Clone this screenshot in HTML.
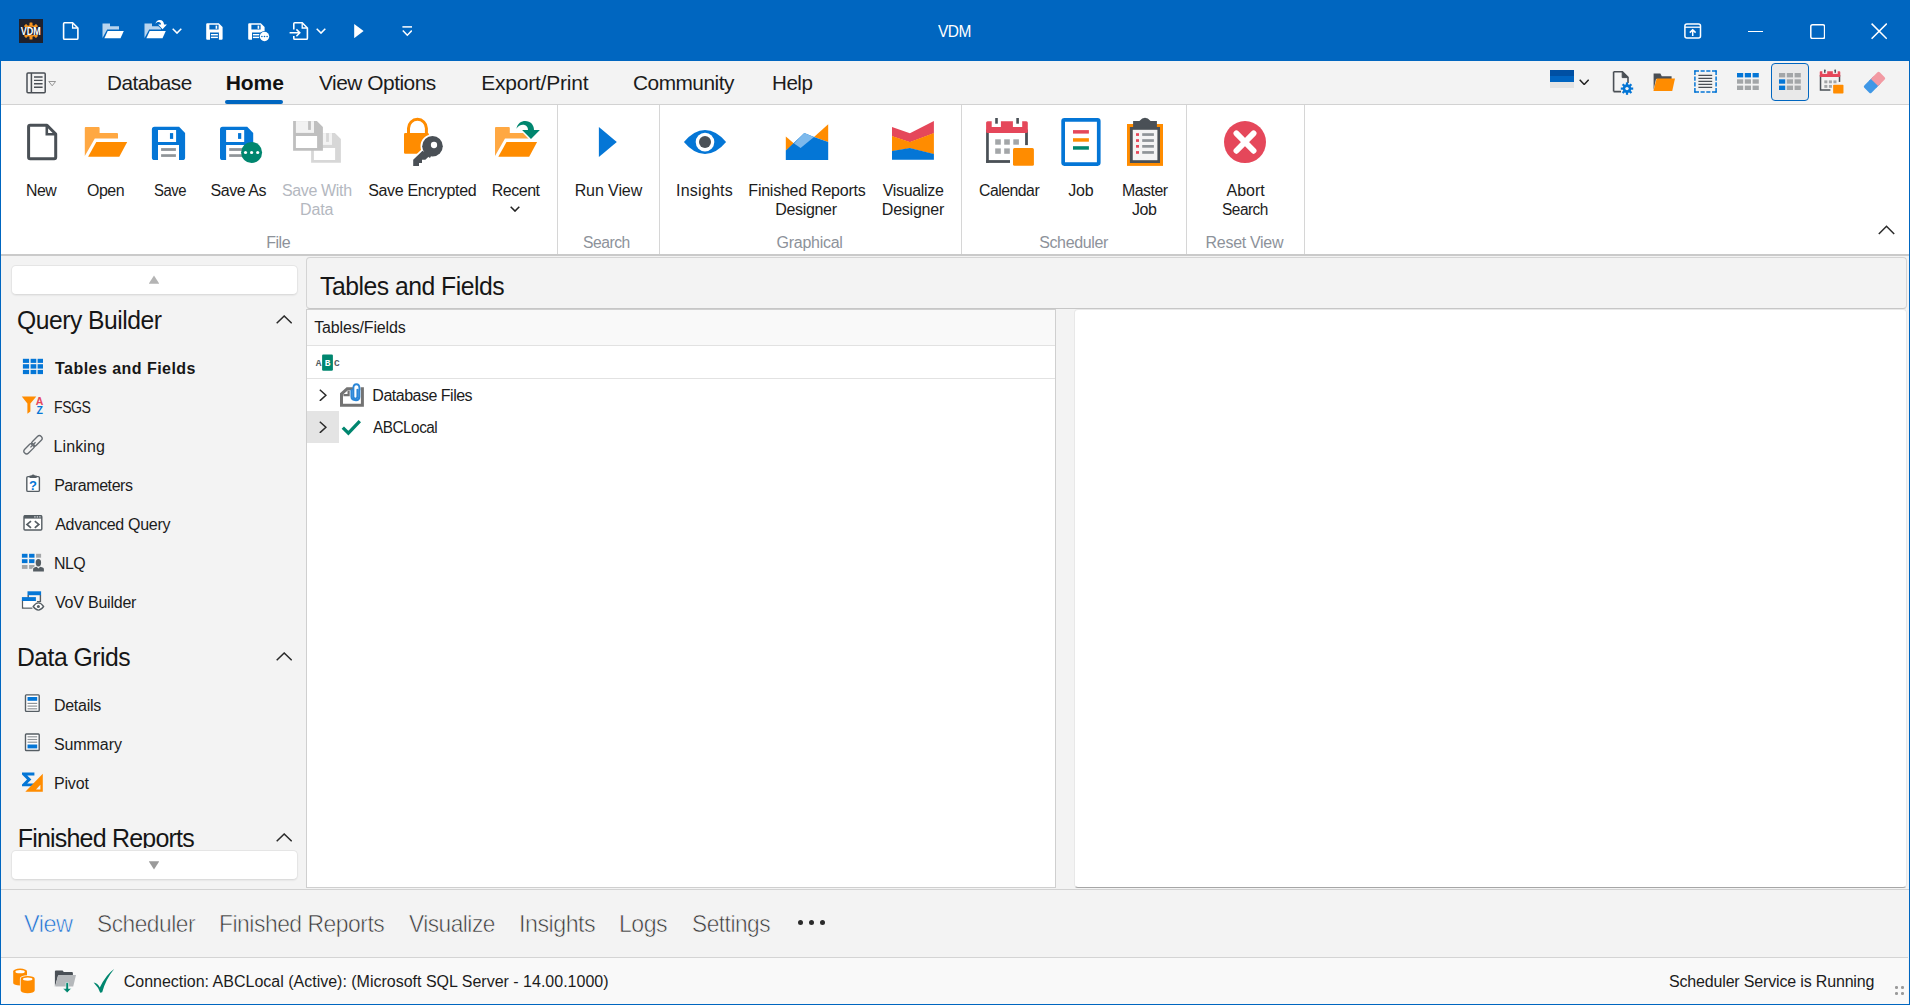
<!DOCTYPE html><html><head><meta charset="utf-8"><title>VDM</title><style>
html,body{margin:0;padding:0;}body{width:1910px;height:1005px;position:relative;overflow:hidden;background:#f3f3f3;font-family:"Liberation Sans", sans-serif;}
body>div,body>svg,body>span{position:absolute;display:block;}
span.t{white-space:nowrap;line-height:1;}
</style></head><body>
<div style="left:0px;top:0px;width:1910px;height:61px;background:#0066c0;"></div>
<div style="left:0px;top:104px;width:1910px;height:1px;background:#d2d2d2;"></div>
<div style="left:0px;top:105px;width:1910px;height:149px;background:#fff;"></div>
<div style="left:0px;top:254px;width:1910px;height:2px;background:#cacaca;"></div>
<div style="left:557px;top:105px;width:1px;height:149px;background:#d6d6d6;"></div>
<div style="left:659px;top:105px;width:1px;height:149px;background:#d6d6d6;"></div>
<div style="left:961px;top:105px;width:1px;height:149px;background:#d6d6d6;"></div>
<div style="left:1186px;top:105px;width:1px;height:149px;background:#d6d6d6;"></div>
<div style="left:1304px;top:105px;width:1px;height:149px;background:#d6d6d6;"></div>
<div style="left:0px;top:61px;width:1px;height:944px;background:#0066c0;"></div>
<div style="left:1909px;top:61px;width:1px;height:944px;background:#0066c0;"></div>
<div style="left:0px;top:1004px;width:1910px;height:1px;background:#0066c0;"></div>
<div style="left:1px;top:256px;width:304px;height:633px;background:#f3f3f3;"></div>
<div style="left:1px;top:889px;width:1908px;height:1px;background:#d2d2d2;"></div>
<div style="left:11px;top:265px;width:287px;height:30px;background:#fff;border:1px solid #e5e5e5;border-bottom-color:#dcdcdc;border-radius:5px;box-sizing:border-box;box-shadow:0 1px 1.5px rgba(0,0,0,.05);"></div>
<svg style="left:148px;top:275px;" width="12" height="9" viewBox="0 0 12 9"><path d="M6 0.5 L11 8.2 Q11.2 8.8 10.5 8.8 L1.5 8.8 Q0.8 8.8 1 8.2 Z" fill="#b4b4b4"/></svg>
<div style="left:11px;top:850px;width:287px;height:30px;background:#fff;border:1px solid #e5e5e5;border-bottom-color:#dcdcdc;border-radius:5px;box-sizing:border-box;box-shadow:0 1px 1.5px rgba(0,0,0,.05);"></div>
<svg style="left:148px;top:861px;" width="12" height="9" viewBox="0 0 12 9"><path d="M6 8.5 L11 0.8 Q11.2 0.2 10.5 0.2 L1.5 0.2 Q0.8 0.2 1 0.8 Z" fill="#9a9a9a"/></svg>
<div style="left:306px;top:257px;width:1601px;height:52px;background:#f3f3f3;border:1px solid #d4d4d4;border-bottom:1.5px solid #c6c6c6;border-radius:4px;box-sizing:border-box;"></div>
<div style="left:306px;top:309px;width:750px;height:579px;background:#fff;border:1px solid #cfcfcf;box-sizing:border-box;"></div>
<div style="left:307px;top:310px;width:748px;height:35px;background:#f9f9f9;"></div>
<div style="left:307px;top:345px;width:748px;height:1px;background:#e2e2e2;"></div>
<div style="left:307px;top:378px;width:748px;height:1px;background:#e2e2e2;"></div>
<div style="left:307px;top:411px;width:32px;height:32px;background:#e4e4e4;"></div>
<div style="left:1074px;top:309px;width:833px;height:579px;background:#fff;border:1px solid #e8e8e8;border-bottom-color:#a6a6a6;border-radius:4px;box-sizing:border-box;"></div>
<div style="left:1px;top:957px;width:1907px;height:1px;background:#d4d4d4;"></div>
<div style="left:1px;top:958px;width:1907px;height:46px;background:#f9f9f9;"></div>
<div style="left:0;top:820px;width:300px;height:27.6px;overflow:hidden;"><span class="t" id="fr" style="position:absolute;left:17.7px;top:6px;font-size:25px;color:#161616;letter-spacing:-0.80px;">Finished Reports</span></div>
<div style="left:798.0px;top:919.5px;width:5px;height:5px;background:#2a2a2a;border-radius:50%;"></div>
<div style="left:809.0px;top:919.5px;width:5px;height:5px;background:#2a2a2a;border-radius:50%;"></div>
<div style="left:820.0px;top:919.5px;width:5px;height:5px;background:#2a2a2a;border-radius:50%;"></div>
<svg style="left:19px;top:19px;" width="24" height="24" viewBox="0 0 24 24"><rect width="24" height="24" fill="#1f212d"/><g fill="#f7941e"><circle cx="12" cy="12" r="6.1"/><rect x="10.5" y="3.5" width="3" height="3.6" rx="0.5" transform="rotate(0 12 12)"/><rect x="10.5" y="3.5" width="3" height="3.6" rx="0.5" transform="rotate(45 12 12)"/><rect x="10.5" y="3.5" width="3" height="3.6" rx="0.5" transform="rotate(90 12 12)"/><rect x="10.5" y="3.5" width="3" height="3.6" rx="0.5" transform="rotate(135 12 12)"/><rect x="10.5" y="3.5" width="3" height="3.6" rx="0.5" transform="rotate(180 12 12)"/><rect x="10.5" y="3.5" width="3" height="3.6" rx="0.5" transform="rotate(225 12 12)"/><rect x="10.5" y="3.5" width="3" height="3.6" rx="0.5" transform="rotate(270 12 12)"/><rect x="10.5" y="3.5" width="3" height="3.6" rx="0.5" transform="rotate(315 12 12)"/></g><circle cx="12" cy="12" r="4.2" fill="#1f212d"/><rect x="0.6" y="8.1" width="22.8" height="7.9" fill="#1f212d"/><text x="11.8" y="16" font-family="Liberation Sans, sans-serif" font-size="11" font-weight="bold" fill="#fff" text-anchor="middle" textLength="20" lengthAdjust="spacingAndGlyphs">VDM</text></svg>
<svg style="left:62px;top:21px;" width="18" height="20" viewBox="0 0 18 20"><path d="M2.3 1.8 H10.6 L15.9 7 V17.2 Q15.9 18.3 14.8 18.3 H2.6 Q1.6 18.3 1.6 17.2 V2.8 Q1.6 1.8 2.6 1.8 Z" fill="none" stroke="#fff" stroke-width="1.6" stroke-linejoin="round"/><path d="M10.6 2.2 V7 H15.6" fill="none" stroke="#fff" stroke-width="1.3"/></svg>
<svg style="left:101.7px;top:23px;" width="23" height="16" viewBox="0 0 23 16"><path d="M0.5 0.4 H8 V3.3 H17 V6.6 H5.2 L0.5 15 Z" fill="#fff" opacity=".72"/><path d="M5.7 8 H21.8 L18.5 15.3 H2.4 Z" fill="#fff"/></svg>
<svg style="left:143.6px;top:23px;" width="23" height="16" viewBox="0 0 23 16"><path d="M0.5 0.4 H8 V3.3 H17 V6.6 H5.2 L0.5 15 Z" fill="#fff" opacity=".72"/><path d="M5.7 8 H21.8 L18.5 15.3 H2.4 Z" fill="#fff"/></svg>
<svg style="left:153px;top:18px;" width="16" height="13" viewBox="153 18 16 13"><g transform="translate(155.4,20) scale(0.49,0.51) translate(-516.4,-121)"><path d="M516.4 128.8 C517.4 123.4 521.4 121 525.2 121 C530.6 121 534 125 534 129.9 H539.9 L531 138.9 L522.1 129.9 H528 C528 127 526 124.8 522.9 124.8 C520.4 124.8 518 126 516.4 128.8 Z" fill="#0066c0" stroke="#0066c0" stroke-width="3.4"/><path d="M516.4 128.8 C517.4 123.4 521.4 121 525.2 121 C530.6 121 534 125 534 129.9 H539.9 L531 138.9 L522.1 129.9 H528 C528 127 526 124.8 522.9 124.8 C520.4 124.8 518 126 516.4 128.8 Z" fill="#fff"/></g></svg>
<svg style="left:172.3px;top:28.2px;" width="10" height="6" viewBox="0 0 10 6"><path d="M0.7 0.7 L5.0 5.1 L9.3 0.7" fill="none" stroke="#fff" stroke-width="1.5"/></svg>
<svg style="left:205.8px;top:23.2px;" width="17" height="17" viewBox="0 0 17 17"><path d="M1.2 0.2 H12.8 L16.6 4 V15.8 Q16.6 16.8 15.6 16.8 H1.2 Q0.2 16.8 0.2 15.8 V1.2 Q0.2 0.2 1.2 0.2 Z M3.4 1.8 V6.6 H12.6 V1.8 Z M4 9.6 V16.8 H12.9 V9.6 Z" fill="#fff" fill-rule="evenodd"/><rect x="9.6" y="2.6" width="1.6" height="3.2" fill="#fff"/><rect x="4.9" y="11" width="7" height="1.4" fill="#fff"/><rect x="4.9" y="13.7" width="7" height="1.4" fill="#fff"/></svg>
<svg style="left:248px;top:23.2px;" width="17" height="17" viewBox="0 0 17 17"><path d="M1.2 0.2 H12.8 L16.6 4 V15.8 Q16.6 16.8 15.6 16.8 H1.2 Q0.2 16.8 0.2 15.8 V1.2 Q0.2 0.2 1.2 0.2 Z M3.4 1.8 V6.6 H12.6 V1.8 Z M4 9.6 V16.8 H12.9 V9.6 Z" fill="#fff" fill-rule="evenodd"/><rect x="9.6" y="2.6" width="1.6" height="3.2" fill="#fff"/><rect x="4.9" y="11" width="7" height="1.4" fill="#fff"/><rect x="4.9" y="13.7" width="7" height="1.4" fill="#fff"/></svg>
<svg style="left:259px;top:31px;" width="11" height="11" viewBox="0 0 11 11"><circle cx="5.5" cy="5.5" r="5.5" fill="#0066c0"/><circle cx="5.5" cy="5.5" r="4.7" fill="#fff"/><circle cx="2.9" cy="5.5" r=".8" fill="#0066c0"/><circle cx="5.5" cy="5.5" r=".8" fill="#0066c0"/><circle cx="8.1" cy="5.5" r=".8" fill="#0066c0"/></svg>
<svg style="left:289px;top:21px;" width="20" height="20" viewBox="0 0 20 20"><path d="M4.8 8.4 V2.8 Q4.8 1.8 5.8 1.8 H13.2 L18.4 7 V17.2 Q18.4 18.3 17.4 18.3 H5.8 Q4.8 18.3 4.8 17.2 V15" fill="none" stroke="#fff" stroke-width="1.6"/><path d="M13.2 2.2 V7 H18" fill="none" stroke="#fff" stroke-width="1.3"/><path d="M0.6 11.8 H10.6 M7.4 8.4 L10.8 11.8 L7.4 15.2" fill="none" stroke="#fff" stroke-width="1.5"/></svg>
<svg style="left:316.3px;top:28.2px;" width="10" height="6" viewBox="0 0 10 6"><path d="M0.7 0.7 L5.0 5.1 L9.3 0.7" fill="none" stroke="#fff" stroke-width="1.5"/></svg>
<svg style="left:353.8px;top:24px;" width="10" height="14.2" viewBox="0 0 10 14.2"><path d="M0.2 0 L9.6 7.1 L0.2 14.2 Z" fill="#fff"/></svg>
<svg style="left:401.8px;top:26px;" width="10.6" height="10.6" viewBox="0 0 10.6 10.6"><path d="M0.4 0.9 H10.2" stroke="#fff" stroke-width="1.5"/><path d="M0.8 4.6 L5.3 9.2 L9.8 4.6" fill="none" stroke="#fff" stroke-width="1.5"/></svg>
<svg style="left:1683.5px;top:23px;" width="18" height="16" viewBox="0 0 18 16"><rect x="0.9" y="0.9" width="15.6" height="14" rx="2" fill="none" stroke="#fff" stroke-width="1.5"/><path d="M1 4.2 H16.4" stroke="#fff" stroke-width="1.3"/><path d="M8.7 13 V7 M5.8 9.6 L8.7 6.7 L11.6 9.6" fill="none" stroke="#fff" stroke-width="1.5"/></svg>
<div style="left:1747.5px;top:31px;width:15.3px;height:1.4px;background:#fff;"></div>
<svg style="left:1809.5px;top:23.5px;" width="15.4" height="15.4" viewBox="0 0 15.4 15.4"><rect x="0.8" y="0.8" width="13.8" height="13.8" rx="1.8" fill="none" stroke="#fff" stroke-width="1.5"/></svg>
<svg style="left:1871px;top:23.3px;" width="16.4" height="16.4" viewBox="0 0 16.4 16.4"><path d="M0.6 0.6 L15.8 15.8 M15.8 0.6 L0.6 15.8" stroke="#fff" stroke-width="1.5"/></svg>
<svg style="left:25.5px;top:72px;" width="21" height="22" viewBox="0 0 21 22"><rect x="1" y="1" width="18.2" height="19.8" rx="1" fill="none" stroke="#4a4f55" stroke-width="1.5"/><path d="M5.4 1 V20.8" stroke="#4a4f55" stroke-width="1.5"/><path d="M8 5 H16.6 M8 8.4 H16.6 M8 11.8 H16.6 M8 15.2 H16.6" stroke="#4a4f55" stroke-width="1.4"/></svg>
<svg style="left:47.5px;top:81px;" width="8.4" height="5.6" viewBox="0 0 8.4 5.6"><path d="M0.8 0.5 H7.6 L4.2 4.8 Z" fill="none" stroke="#8a8a8a" stroke-width="0.9"/></svg>
<div style="left:225px;top:100px;width:58px;height:4px;background:#0066c0;border-radius:2px;"></div>
<div style="left:1550px;top:70px;width:24px;height:6px;background:#0050a3;"></div>
<div style="left:1550px;top:76px;width:24px;height:6px;background:#0064c0;"></div>
<div style="left:1550px;top:82px;width:24px;height:6px;background:#e4e4e4;"></div>
<svg style="left:1579px;top:78.6px;" width="10.4" height="6.4" viewBox="0 0 10.4 6.4"><path d="M0.7 0.7 L5.2 5.5 L9.7 0.7" fill="none" stroke="#222" stroke-width="1.5"/></svg>
<svg style="left:1612px;top:70px;" width="22" height="25" viewBox="0 0 22 25"><path d="M1.6 1.8 H10.4 L16 7.4 V13 M9 21.6 H1.6 Z M1.6 1.8 V21.6" fill="none" stroke="#4a4f55" stroke-width="1.6"/><path d="M10.2 2 V7.6 H15.8 Z" fill="#4a4f55" stroke="#4a4f55" stroke-width="1"/><g fill="#0476d6"><circle cx="15" cy="18.6" r="4.3"/><rect x="13.9" y="12.4" width="2.2" height="3" transform="rotate(0 15 18.6)"/><rect x="13.9" y="12.4" width="2.2" height="3" transform="rotate(45 15 18.6)"/><rect x="13.9" y="12.4" width="2.2" height="3" transform="rotate(90 15 18.6)"/><rect x="13.9" y="12.4" width="2.2" height="3" transform="rotate(135 15 18.6)"/><rect x="13.9" y="12.4" width="2.2" height="3" transform="rotate(180 15 18.6)"/><rect x="13.9" y="12.4" width="2.2" height="3" transform="rotate(225 15 18.6)"/><rect x="13.9" y="12.4" width="2.2" height="3" transform="rotate(270 15 18.6)"/><rect x="13.9" y="12.4" width="2.2" height="3" transform="rotate(315 15 18.6)"/></g><circle cx="15" cy="18.6" r="1.7" fill="#f3f3f3"/></svg>
<svg style="left:1652.5px;top:72.5px;" width="22.4" height="18.6" viewBox="0 0 22.4 18.6"><path d="M0.6 0.4 H7.4 L8.8 3.2 H18.6 V6 H3 L0.6 17 Z" fill="#4a4f55"/><path d="M3.6 5.4 H22 L19.2 18.2 H0.4 Z" fill="#ff8c00"/></svg>
<svg style="left:1693.8px;top:69.8px;" width="23" height="23" viewBox="0 0 23 23"><path d="M0.9 0.9 L22.1 0.9" stroke="#0476d6" stroke-width="1.5" stroke-dasharray="4.1 1.6" stroke-linecap="butt"/><path d="M22.1 0.9 L22.1 22.1" stroke="#0476d6" stroke-width="1.5" stroke-dasharray="4.1 1.6" stroke-linecap="butt"/><path d="M22.1 22.1 L0.9 22.1" stroke="#0476d6" stroke-width="1.5" stroke-dasharray="4.1 1.6" stroke-linecap="butt"/><path d="M0.9 22.1 L0.9 0.9" stroke="#0476d6" stroke-width="1.5" stroke-dasharray="4.1 1.6" stroke-linecap="butt"/><rect x="0.15" y="0.15" width="1.5" height="1.5" fill="#0476d6"/><rect x="21.35" y="0.15" width="1.5" height="1.5" fill="#0476d6"/><rect x="0.15" y="21.35" width="1.5" height="1.5" fill="#0476d6"/><rect x="21.35" y="21.35" width="1.5" height="1.5" fill="#0476d6"/><path d="M4.4 5.3 H18.2 M4.4 8.3 H18.2 M4.4 11.3 H18.2 M4.4 14.3 H18.2 M4.4 17.3 H18.2" stroke="#4a4f55" stroke-width="1.35"/></svg>
<svg style="left:1737px;top:72.9px;" width="21.8" height="17" viewBox="0 0 21.8 17"><rect x="0.0" y="0.0" width="6.2" height="4.4" fill="#0476d6"/><rect x="7.8" y="0.0" width="6.2" height="4.4" fill="#0476d6"/><rect x="15.6" y="0.0" width="6.2" height="4.4" fill="#0476d6"/><rect x="0.0" y="6.3" width="6.2" height="4.4" fill="#a3a6a8"/><rect x="7.8" y="6.3" width="6.2" height="4.4" fill="#a3a6a8"/><rect x="15.6" y="6.3" width="6.2" height="4.4" fill="#a3a6a8"/><rect x="0.0" y="12.6" width="6.2" height="4.4" fill="#a3a6a8"/><rect x="7.8" y="12.6" width="6.2" height="4.4" fill="#a3a6a8"/><rect x="15.6" y="12.6" width="6.2" height="4.4" fill="#a3a6a8"/></svg>
<div style="left:1771px;top:63px;width:38px;height:38px;background:#e9e9e9;border:1px solid #0066c0;border-radius:4px;box-sizing:border-box;"></div>
<svg style="left:1779px;top:72.9px;" width="21.8" height="17" viewBox="0 0 21.8 17"><rect x="0.0" y="0.0" width="6.2" height="4.4" fill="#a3a6a8"/><rect x="7.8" y="0.0" width="6.2" height="4.4" fill="#a3a6a8"/><rect x="15.6" y="0.0" width="6.2" height="4.4" fill="#a3a6a8"/><rect x="0.0" y="6.3" width="6.2" height="4.4" fill="#0476d6"/><rect x="7.8" y="6.3" width="6.2" height="4.4" fill="#a3a6a8"/><rect x="15.6" y="6.3" width="6.2" height="4.4" fill="#a3a6a8"/><rect x="0.0" y="12.6" width="6.2" height="4.4" fill="#0476d6"/><rect x="7.8" y="12.6" width="6.2" height="4.4" fill="#a3a6a8"/><rect x="15.6" y="12.6" width="6.2" height="4.4" fill="#a3a6a8"/></svg>
<svg style="left:1819px;top:69.3px;" width="25.08" height="25.08" viewBox="0 0 33 33"><path d="M2 8 V27.5 H15" fill="none" stroke="#4a5056" stroke-width="2"/><path d="M27 8 V17" stroke="#4a5056" stroke-width="2"/><rect x="1" y="3" width="27" height="7.6" rx="1" fill="#e5475a"/><rect x="6.6" y="1" width="2" height="4" fill="#4a5056"/><rect x="20.4" y="1" width="2" height="4" fill="#4a5056"/><rect x="4.4" y="2.6" width="6.4" height="3.8" fill="#f3f3f3"/><rect x="18.2" y="2.6" width="6.4" height="3.8" fill="#f3f3f3"/><rect x="6.6" y="1" width="2" height="4" fill="#4a5056"/><rect x="20.4" y="1" width="2" height="4" fill="#4a5056"/><g fill="#a3a6a8"><rect x="7" y="15" width="4" height="3.8"/><rect x="13" y="15" width="4" height="3.8"/><rect x="19" y="15" width="4" height="3.8"/><rect x="7" y="21" width="4" height="3.8"/><rect x="13" y="21" width="4" height="3.8"/></g><rect x="18.6" y="20.6" width="13.6" height="11.6" rx="1" fill="#ff8c00"/></svg>
<svg style="left:1862.5px;top:70.5px;" width="23" height="23" viewBox="0 0 23 23"><g transform="rotate(-45 11.5 11.5)"><rect x="0.6" y="6.4" width="10.9" height="10.2" rx="1.6" fill="#3f97e6"/><rect x="11.5" y="6.4" width="10.9" height="10.2" rx="1.6" fill="#f29aa3"/><rect x="9" y="6.4" width="5" height="10.2" fill="#3f97e6"/><rect x="11.5" y="6.4" width="4" height="10.2" fill="#f29aa3"/></g></svg>
<svg style="left:1877.6px;top:225.2px;" width="17" height="10" viewBox="0 0 17 10"><path d="M0.8 9 L8.5 1.2 L16.2 9" fill="none" stroke="#2a2a2a" stroke-width="1.5"/></svg>
<svg style="left:20px;top:116px;" width="46" height="52" viewBox="20 116 46 52"><path d="M30.2 125.2 H47 L55.7 134 V157.2 Q55.7 158.7 54.2 158.7 H30.2 Q28.6 158.7 28.6 157.2 V126.8 Q28.6 125.2 30.2 125.2 Z" fill="none" stroke="#4a5056" stroke-width="3" stroke-linejoin="round"/><path d="M46.8 126 V134.2 H55" fill="none" stroke="#4a5056" stroke-width="2.6"/></svg>
<svg style="left:82px;top:118px;" width="48" height="48" viewBox="82 118 48 48"><path d="M85.7 126.9 H98.6 Q99.6 126.9 99.6 127.9 V133 H117 Q118 133 118 134 V138.6 H94.8 L84.8 155.9 V127.9 Q84.8 126.9 85.7 126.9 Z" fill="#ffa842"/><path d="M96.3 142 H127.2 L119.3 156.8 H88.1 Z" fill="#ff8c00"/></svg>
<svg style="left:146px;top:120px;" width="48" height="48" viewBox="146 120 48 48"><path d="M154.5 126.8 H179.1 L185.1 133 V157.4 Q185.1 160 182.5 160 H154.5 Q151.9 160 151.9 157.4 V129.4 Q151.9 126.8 154.5 126.8 Z" fill="#0476d6"/><rect x="158.0" y="130" width="18.1" height="12" fill="#fff"/><rect x="169.95" y="133.1" width="3.2" height="5.8" fill="#0476d6"/><rect x="158.0" y="145" width="21" height="15.2" fill="#fff"/><rect x="161.1" y="148.1" width="14.8" height="2.8" fill="#8f9498"/><rect x="161.1" y="154.2" width="14.8" height="2.7" fill="#8f9498"/></svg>
<svg style="left:214px;top:120px;" width="52" height="48" viewBox="214 120 52 48"><path d="M222.6 126.8 H247.2 L253.2 133 V157.4 Q253.2 160 250.6 160 H222.6 Q220.0 160 220.0 157.4 V129.4 Q220.0 126.8 222.6 126.8 Z" fill="#0476d6"/><rect x="226.1" y="130" width="18.1" height="12" fill="#fff"/><rect x="238.05" y="133.1" width="3.2" height="5.8" fill="#0476d6"/><rect x="226.1" y="145" width="21" height="15.2" fill="#fff"/><rect x="229.2" y="148.1" width="14.8" height="2.8" fill="#8f9498"/><rect x="229.2" y="154.2" width="14.8" height="2.7" fill="#8f9498"/><circle cx="251.6" cy="152.5" r="10.5" fill="#00866f"/><circle cx="245.5" cy="152.5" r="1.6" fill="#fff"/><circle cx="251.6" cy="152.5" r="1.6" fill="#fff"/><circle cx="257.7" cy="152.5" r="1.6" fill="#fff"/></svg>
<svg style="left:290px;top:118px;" width="54" height="48" viewBox="290 118 54 48"><path d="M311.1 133.1 H334.9 L340.9 139.1 V162.8 H311.1 Z" fill="#d7d7d7"/><rect x="313.9" y="133.1" width="18.1" height="11.8" fill="#f3f3f3"/><rect x="326.1" y="133.1" width="2.8" height="8.8" fill="#d7d7d7"/><rect x="313.9" y="148.0" width="21.2" height="12" fill="#fff"/><path d="M293.1 121.1 H316.9 L322.9 127.1 V150.8 H293.1 Z" fill="#bfbfbf"/><rect x="295.9" y="121.1" width="18.1" height="11.8" fill="#f2f2f2"/><rect x="308.1" y="121.1" width="2.8" height="8.8" fill="#bfbfbf"/><rect x="295.9" y="136.0" width="21.2" height="12" fill="#fff"/></svg>
<svg style="left:400px;top:116px;" width="46" height="52" viewBox="400 116 46 52"><path d="M408.5 134 V128.3 A8.95 8.95 0 0 1 426.4 128.3 V134" fill="none" stroke="#ff8c00" stroke-width="3"/><rect x="404" y="133" width="24.8" height="20.8" rx="1.2" fill="#ff8c00"/><g stroke="#fff" stroke-width="3.4" stroke-linejoin="round" fill="#fff"><circle cx="432.5" cy="146.3" r="10.3"/><path d="M422.6 150.8 L413.2 159.8 V166 H419 V163 H422 V159.8 H425.3 L428.8 156.5 Z"/></g><circle cx="432.5" cy="146.3" r="10.3" fill="#4a5056"/><path d="M422.6 150.8 L413.2 159.8 V166 H419 V163 H422 V159.8 H425.3 L428.8 156.5 Z" fill="#4a5056"/><path d="M421 152 L430 158 L434 150 Z" fill="#4a5056"/><circle cx="434" cy="145" r="3.15" fill="#fff"/></svg>
<svg style="left:492px;top:118px;" width="50" height="48" viewBox="492 118 50 48"><path d="M496 126.9 H508.8 Q509.8 126.9 509.8 127.9 V133 H524 L529 138.6 H505 L495 155.9 V127.9 Q495 126.9 496 126.9 Z" fill="#ffa842"/><path d="M506.5 142 H537.1 L529.2 156.8 H498.3 Z" fill="#ff8c00"/><path d="M516.4 128.8 C517.4 123.4 521.4 121 525.2 121 C530.6 121 534 125 534 129.9 H539.9 L531 138.9 L522.1 129.9 H528 C528 127 526 124.8 522.9 124.8 C520.4 124.8 518 126 516.4 128.8 Z" fill="#fff" stroke="#fff" stroke-width="3" stroke-linejoin="round"/><path d="M516.4 128.8 C517.4 123.4 521.4 121 525.2 121 C530.6 121 534 125 534 129.9 H539.9 L531 138.9 L522.1 129.9 H528 C528 127 526 124.8 522.9 124.8 C520.4 124.8 518 126 516.4 128.8 Z" fill="#00866f"/></svg>
<svg style="left:510px;top:206.4px;" width="10" height="6" viewBox="0 0 10 6"><path d="M0.7 0.7 L5.0 5.1 L9.3 0.7" fill="none" stroke="#222" stroke-width="1.5"/></svg>
<svg style="left:596px;top:124px;" width="24" height="36" viewBox="596 124 24 36"><path d="M598.9 127.1 L616.8 142.1 L598.9 157.1 Z" fill="#0476d6"/></svg>
<svg style="left:682px;top:126px;" width="46" height="32" viewBox="682 126 46 32"><path d="M683.9 142.1 Q694 130.1 705 130.1 Q716 130.1 726.1 142.1 Q716 154.1 705 154.1 Q694 154.1 683.9 142.1 Z" fill="#0476d6"/><circle cx="705" cy="142.1" r="9.3" fill="#fff"/><circle cx="705" cy="142.1" r="6" fill="#4a5056"/></svg>
<svg style="left:784px;top:122px;" width="46" height="40" viewBox="784 122 46 40"><path d="M785.8 136.6 L794 143.5 L785.8 150.6 Z" fill="#ff8c00"/><path d="M828.2 124.2 L814 137 L828.2 142 Z" fill="#ff8c00"/><path d="M785.8 159.9 V150.4 L804.3 132.9 L814 137 L828.2 142 V159.9 Z" fill="#0476d6"/><path d="M804.3 132.9 L814 137 L800.6 148 L794 143.5 Z" fill="#7db9ec"/></svg>
<svg style="left:890px;top:119px;" width="46" height="43" viewBox="890 119 46 43"><path d="M892 126.9 L909.9 133.2 L933.9 121 V133.2 L909.9 142.2 L892 136.2 Z" fill="#e5475a"/><path d="M892 135.9 L909.9 141.9 L933.9 132.9 V154.3 L909.9 148.2 L892 151.3 Z" fill="#ff8c00"/><path d="M892 151.1 L909.9 148 L933.9 154.1 V159.8 H892 Z" fill="#0476d6"/></svg>
<svg style="left:984px;top:116px;" width="52" height="52" viewBox="984 116 52 52"><rect x="986.1" y="129.6" width="2.7" height="33.3" rx="0" fill="#4a5056"/><rect x="986.1" y="160.1" width="23.9" height="2.8" rx="0" fill="#4a5056"/><rect x="1025.1" y="129.6" width="2.8" height="15.5" rx="0" fill="#4a5056"/><rect x="986.1" y="121.2" width="41.7" height="11.7" rx="1.5" fill="#e5475a"/><rect x="991.7" y="120.8" width="9.2" height="6.2" rx="0" fill="#fff"/><rect x="1012.9" y="120.8" width="9.3" height="6.2" rx="0" fill="#fff"/><rect x="995.2" y="118.0" width="2.6" height="5.7" rx="0" fill="#4a5056"/><rect x="1016.3" y="118.0" width="2.6" height="5.7" rx="0" fill="#4a5056"/><rect x="995.2" y="139.3" width="5.6" height="5.4" rx="0" fill="#a3a6a8"/><rect x="1004.2" y="139.3" width="5.6" height="5.4" rx="0" fill="#a3a6a8"/><rect x="1013.3" y="139.3" width="5.6" height="5.4" rx="0" fill="#a3a6a8"/><rect x="995.2" y="148.4" width="5.6" height="5.4" rx="0" fill="#a3a6a8"/><rect x="1004.2" y="148.4" width="5.6" height="5.4" rx="0" fill="#a3a6a8"/><rect x="1013.0" y="148.1" width="20.9" height="17.7" rx="1.5" fill="#ff8c00"/></svg>
<svg style="left:1059px;top:116px;" width="44" height="52" viewBox="1059 116 44 52"><rect x="1063.15" y="119.85" width="35.6" height="44.2" rx="1.2" fill="#fff" stroke="#0476d6" stroke-width="3.7"/><rect x="1073" y="130.1" width="15.9" height="3.5" fill="#e5475a"/><rect x="1073" y="138.2" width="15.9" height="3.5" fill="#ff8c00"/><rect x="1073" y="146.2" width="15.9" height="3.5" fill="#00866f"/></svg>
<svg style="left:1125px;top:114px;" width="40" height="54" viewBox="1125 114 40 54"><rect x="1127" y="124" width="36" height="41.9" fill="#ff8c00"/><rect x="1129.9" y="127" width="30.1" height="36" fill="#4a5056"/><path d="M1133.1 127.7 V120.9 H1139.4 Q1145 114.8 1150.6 120.9 H1156.9 V127.7 Z" fill="#4a5056"/><rect x="1132.75" y="129.8" width="24.65" height="30.4" fill="#f4f4f4"/><rect x="1136" y="133.2" width="3" height="2.7" fill="#e5475a"/><rect x="1142.2" y="133.2" width="11.7" height="2.7" fill="#8f9498"/><rect x="1136" y="139.2" width="3" height="2.7" fill="#e5475a"/><rect x="1142.2" y="139.2" width="11.7" height="2.7" fill="#8f9498"/><rect x="1136" y="145" width="3" height="2.7" fill="#e5475a"/><rect x="1142.2" y="145" width="11.7" height="2.7" fill="#8f9498"/><rect x="1136" y="151.1" width="3" height="2.7" fill="#e5475a"/><rect x="1142.2" y="151.1" width="11.7" height="2.7" fill="#8f9498"/></svg>
<svg style="left:1222px;top:119px;" width="46" height="46" viewBox="1222 119 46 46"><circle cx="1245" cy="142.1" r="21" fill="#e5475a"/><path d="M1236.4 133.4 L1253.6 150.8 M1253.6 133.4 L1236.4 150.8" stroke="#fff" stroke-width="5.8" stroke-linecap="round"/></svg>
<svg style="left:276px;top:315.0px;" width="16.4" height="9" viewBox="0 0 16.4 9"><path d="M0.7 8.3 L8.2 1 L15.7 8.3" fill="none" stroke="#2a2a2a" stroke-width="1.5"/></svg>
<svg style="left:276px;top:652.0px;" width="16.4" height="9" viewBox="0 0 16.4 9"><path d="M0.7 8.3 L8.2 1 L15.7 8.3" fill="none" stroke="#2a2a2a" stroke-width="1.5"/></svg>
<svg style="left:276px;top:833.0px;" width="16.4" height="9" viewBox="0 0 16.4 9"><path d="M0.7 8.3 L8.2 1 L15.7 8.3" fill="none" stroke="#2a2a2a" stroke-width="1.5"/></svg>
<svg style="left:22px;top:358px;" width="22" height="17" viewBox="22 358 22 17"><rect x="22.9" y="358.8" width="6.2" height="4.1" fill="#0476d6"/><rect x="22.9" y="364.2" width="6.2" height="4.4" fill="#0476d6"/><rect x="22.9" y="369.9" width="6.2" height="4.2" fill="#0476d6"/><rect x="30.6" y="358.8" width="5.7" height="4.1" fill="#0476d6"/><rect x="30.6" y="364.2" width="5.7" height="4.4" fill="#0476d6"/><rect x="30.6" y="369.9" width="5.7" height="4.2" fill="#0476d6"/><rect x="37.6" y="358.8" width="5.4" height="4.1" fill="#0476d6"/><rect x="37.6" y="364.2" width="5.4" height="4.4" fill="#0476d6"/><rect x="37.6" y="369.9" width="5.4" height="4.2" fill="#0476d6"/></svg>
<svg style="left:21px;top:395px;" width="24" height="21" viewBox="21 395 24 21"><path d="M21.8 396.5 H36.3 L30.4 403.6 V411.6 L27.4 413.7 V403.6 Z" fill="#ff8c00"/><text x="39.6" y="404.6" font-family="Liberation Sans, sans-serif" font-weight="bold" font-size="10.5" fill="#e5475a" text-anchor="middle">A</text><text x="39.6" y="413.9" font-family="Liberation Sans, sans-serif" font-weight="bold" font-size="10.5" fill="#0476d6" text-anchor="middle">Z</text></svg>
<svg style="left:22px;top:434px;" width="22" height="22" viewBox="22 434 22 22"><g fill="none" stroke="#666c72" stroke-width="1.35" transform="rotate(-45 33 444.8)"><rect x="21.3" y="442.1" width="12.4" height="5.4" rx="2.7"/><rect x="32.3" y="442.1" width="12.4" height="5.4" rx="2.7"/></g><g transform="rotate(-45 33 444.8)"><rect x="29.4" y="444.15" width="7.2" height="1.3" fill="#666c72"/></g></svg>
<svg style="left:25px;top:473px;" width="16" height="20" viewBox="25 473 16 20"><rect x="26.8" y="476.6" width="12.6" height="14.8" rx="1.2" fill="#fff" stroke="#555d63" stroke-width="1.4"/><path d="M29.6 478 V475.6 H31.2 Q33.1 473.2 35 475.6 H36.6 V478 Z" fill="#555d63"/><text x="33.1" y="489.7" font-family="Liberation Sans, sans-serif" font-weight="bold" font-size="13" fill="#0476d6" text-anchor="middle">?</text></svg>
<svg style="left:22px;top:514px;" width="22" height="18" viewBox="22 514 22 18"><rect x="24" y="515.7" width="17.8" height="14.3" rx="1" fill="#fff" stroke="#555d63" stroke-width="1.4"/><rect x="24" y="515.4" width="17.8" height="3.2" fill="#555d63"/><rect x="34.2" y="516.3" width="1.4" height="1.2" fill="#dfe3e6"/><rect x="36.7" y="516.3" width="1.4" height="1.2" fill="#dfe3e6"/><rect x="39.2" y="516.3" width="1.4" height="1.2" fill="#dfe3e6"/><path d="M31 521.1 L27 524.4 L31 527.8 M34.8 521.1 L38.8 524.4 L34.8 527.8" fill="none" stroke="#555d63" stroke-width="1.7"/></svg>
<svg style="left:21px;top:553px;" width="24" height="20" viewBox="21 553 24 20"><rect x="21.9" y="553.8" width="5.6" height="3.9" fill="#0476d6"/><rect x="29.1" y="553.8" width="5.4" height="3.9" fill="#0476d6"/><rect x="36.1" y="553.8" width="5.0" height="3.9" fill="#a3a6a8"/><rect x="21.9" y="559.2" width="5.6" height="3.9" fill="#0476d6"/><rect x="29.1" y="559.2" width="5.4" height="3.9" fill="#0476d6"/><rect x="21.9" y="565" width="5.6" height="3.9" fill="#a3a6a8"/><rect x="29.1" y="565" width="5.4" height="3.9" fill="#a3a6a8"/><g stroke="#f3f3f3" stroke-width="2" fill="#f3f3f3"><ellipse cx="38.4" cy="562.7" rx="2.7" ry="3.7"/><path d="M33.1 571.4 V569.2 Q33.1 568 34.4 567.6 L38.4 566.4 L42.6 567.6 Q43.9 568 43.9 569.2 V571.4 Z"/></g><ellipse cx="38.4" cy="562.7" rx="2.7" ry="3.7" fill="#555d63"/><path d="M33.1 571.4 V569.2 Q33.1 568 34.4 567.6 L36.6 566.8 L38.4 568.4 L40.2 566.8 L42.6 567.6 Q43.9 568 43.9 569.2 V571.4 Z" fill="#555d63"/></svg>
<svg style="left:21px;top:590px;" width="24" height="22" viewBox="21 590 24 22"><path d="M28.2 595 V598 M40.4 595 V601.6 H37" fill="none" stroke="#555d63" stroke-width="1.4"/><rect x="27.5" y="591.3" width="13.6" height="3.9" fill="#0476d6"/><path d="M22.6 600 V608 H32.4" fill="#fff" stroke="#555d63" stroke-width="1.4"/><rect x="23.3" y="601" width="12" height="6.4" fill="#fff"/><rect x="21.9" y="597.1" width="14" height="3.9" fill="#0476d6"/><ellipse cx="38.4" cy="606.5" rx="5.6" ry="4.2" fill="#f3f3f3"/><path d="M33.2 606.5 Q38.4 599.4 43.6 606.5 Q38.4 613.6 33.2 606.5 Z" fill="#fff" stroke="#555d63" stroke-width="1.3"/><circle cx="38.4" cy="606.5" r="1.5" fill="#555d63"/></svg>
<svg style="left:24px;top:693px;" width="17" height="20" viewBox="24 693 17 20"><rect x="25.5" y="694.9" width="13.7" height="16.5" rx="0.8" fill="#fff" stroke="#555d63" stroke-width="1.4"/><rect x="27.5" y="697.0" width="9.7" height="3.8" fill="#0476d6"/><rect x="27.5" y="702.8" width="9.7" height="1.2" fill="#8f9498"/><rect x="27.5" y="705.5" width="9.7" height="1.2" fill="#8f9498"/><rect x="27.5" y="708.2" width="9.7" height="1.2" fill="#8f9498"/></svg>
<svg style="left:24px;top:732px;" width="17" height="20" viewBox="24 732 17 20"><rect x="25.5" y="734.0" width="13.7" height="16.5" rx="0.8" fill="#fff" stroke="#555d63" stroke-width="1.4"/><rect x="27.5" y="736.2" width="9.7" height="1.2" fill="#8f9498"/><rect x="27.5" y="738.9" width="9.7" height="1.2" fill="#8f9498"/><rect x="27.5" y="741.6" width="9.7" height="1.2" fill="#8f9498"/><rect x="27.5" y="744.5" width="9.7" height="3.9" fill="#0476d6"/></svg>
<svg style="left:21px;top:771px;" width="23" height="22" viewBox="21 771 23 22"><path d="M22 772.6 H34.4 V775.4 H27.2 L31.4 779.4 L27.2 783.5 H34.6 V786.3 H22 V784.4 L27 779.4 L22 774.6 Z" fill="#0476d6"/><path d="M42.8 773.7 V791.8 H25.3 Z M40.4 784.8 L36 789.4 H40.4 Z" fill="#ff8c00" fill-rule="evenodd"/></svg>
<svg style="left:315px;top:353px;" width="26" height="19" viewBox="315 353 26 19"><rect x="322.1" y="354.5" width="10.8" height="16.2" rx="1.2" fill="#00866f"/><text x="318.7" y="366.4" font-family="Liberation Mono, monospace" font-weight="bold" font-size="9.5" fill="#555d63" text-anchor="middle">A</text><text x="327.5" y="366.4" font-family="Liberation Mono, monospace" font-weight="bold" font-size="9.5" fill="#fff" text-anchor="middle">B</text><text x="336.8" y="366.4" font-family="Liberation Mono, monospace" font-weight="bold" font-size="9.5" fill="#555d63" text-anchor="middle">C</text></svg>
<svg style="left:319.3px;top:388.7px;" width="7.8" height="12.6" viewBox="0 0 7.8 12.6"><path d="M0.8 0.7 L6.9 6.3 L0.8 11.9" fill="none" stroke="#2a2a2a" stroke-width="1.5"/></svg>
<svg style="left:319.3px;top:420.7px;" width="7.8" height="12.6" viewBox="0 0 7.8 12.6"><path d="M0.8 0.7 L6.9 6.3 L0.8 11.9" fill="none" stroke="#2a2a2a" stroke-width="1.5"/></svg>
<svg style="left:339px;top:382px;" width="26" height="26" viewBox="339 382 26 26"><path d="M353 388.8 H347.2 L341.5 394 V405.2 H362.4 V388.8 H360.6" fill="none" stroke="#737373" stroke-width="3"/><path d="M348.6 390.6 V395.2 H343.4" fill="none" stroke="#737373" stroke-width="2.2"/><path d="M357.4 389.6 V396.6 Q357.4 398.6 355.4 398.6 Q353.4 398.6 353.4 396.6 V388 Q353.4 384.2 356.4 384.2 Q359.4 384.2 359.4 388 V396.8 Q359.4 400.2 356 400.4 Q351.4 400.2 351.4 396.6 V390" fill="none" stroke="#2b87d8" stroke-width="1.9" stroke-linecap="round"/></svg>
<svg style="left:340px;top:418px;" width="23" height="18" viewBox="340 418 23 18"><path d="M342.8 427.6 L348.4 433.2 L359.8 421.2" fill="none" stroke="#00866f" stroke-width="3.3"/></svg>
<svg style="left:12px;top:967px;" width="24" height="28" viewBox="12 967 24 28"><path d="M13.2 971.3 V982.9 A6.9 2.7 0 0 0 27.0 982.9 V971.3 A6.9 2.7 0 0 0 13.2 971.3 Z" fill="#ff8c00"/><ellipse cx="20.1" cy="971.7" rx="4.7" ry="1.6" fill="#fff"/><g stroke="#f9f9f9" stroke-width="1.6"><path d="M20.7 978.7 V990.5 A7.0 2.7 0 0 0 34.7 990.5 V978.7 A7.0 2.7 0 0 0 20.7 978.7 Z" fill="#ff8c00"/><ellipse cx="27.7" cy="979.1" rx="4.8" ry="1.6" fill="#fff"/></g><path d="M20.7 978.7 V990.5 A7.0 2.7 0 0 0 34.7 990.5 V978.7 A7.0 2.7 0 0 0 20.7 978.7 Z" fill="#ff8c00"/><ellipse cx="27.7" cy="979.1" rx="4.8" ry="1.6" fill="#fff"/></svg>
<svg style="left:54px;top:969px;" width="24" height="25" viewBox="54 969 24 25"><path d="M54.9 971.4 Q54.9 970.4 55.9 970.4 H62.6 L63.8 972 H71.9 Q72.9 972 72.9 973 V976 H58 L54.9 986.7 Z" fill="#4a5056"/><path d="M58.1 975.1 H76 L73.2 986.4 H55.3 Z" fill="#b5b8bb"/><path d="M65.9 982.6 H68.5 V988.6 H71.3 L67.2 992.8 L62.9 988.6 H65.9 Z" fill="#00866f" stroke="#f9f9f9" stroke-width="0.6"/></svg>
<svg style="left:93px;top:968px;" width="23" height="26" viewBox="93 968 23 26"><path d="M93.6 982.6 Q97.6 983 99.8 987.6 Q106 974.6 114.2 969 Q106 978.6 102.2 992.2 L100.2 992.8 Q98.6 987.6 93.6 982.6 Z" fill="#00866f"/></svg>
<div style="left:1895.2px;top:986.2px;width:2.6px;height:2.6px;background:#9a9a9a;border-radius:50%;"></div>
<div style="left:1895.2px;top:992.3px;width:2.6px;height:2.6px;background:#9a9a9a;border-radius:50%;"></div>
<div style="left:1901.1px;top:986.2px;width:2.6px;height:2.6px;background:#9a9a9a;border-radius:50%;"></div>
<div style="left:1901.1px;top:992.3px;width:2.6px;height:2.6px;background:#9a9a9a;border-radius:50%;"></div>
<span class="t" id="t0" style="left:938.48px;top:24px;font-size:16px;font-weight:normal;color:#ffffff;letter-spacing:-0.500px;transform:scaleX(0.9664);transform-origin:0 0;">VDM</span>
<span class="t" id="t1" style="left:107.08px;top:72px;font-size:21px;font-weight:normal;color:#1c1c1c;letter-spacing:-0.500px;transform:scaleX(0.9865);transform-origin:0 0;">Database</span>
<span class="t" id="t2" style="left:225.64px;top:72px;font-size:21px;font-weight:bold;color:#111;letter-spacing:-0.040px;">Home</span>
<span class="t" id="t3" style="left:319.2px;top:72px;font-size:21px;font-weight:normal;color:#1c1c1c;letter-spacing:-0.500px;transform:scaleX(0.9956);transform-origin:0 0;">View Options</span>
<span class="t" id="t4" style="left:481.24px;top:72px;font-size:21px;font-weight:normal;color:#1c1c1c;letter-spacing:-0.225px;">Export/Print</span>
<span class="t" id="t5" style="left:633.02px;top:72px;font-size:21px;font-weight:normal;color:#1c1c1c;letter-spacing:-0.500px;transform:scaleX(0.9921);transform-origin:0 0;">Community</span>
<span class="t" id="t6" style="left:772.08px;top:72px;font-size:21px;font-weight:normal;color:#1c1c1c;letter-spacing:-0.500px;transform:scaleX(0.9807);transform-origin:0 0;">Help</span>
<span class="t" id="t7" style="left:25.92px;top:183px;font-size:16px;font-weight:normal;color:#1c1c1c;letter-spacing:-0.500px;transform:scaleX(0.9905);transform-origin:0 0;">New</span>
<span class="t" id="t8" style="left:87.48px;top:183px;font-size:16px;font-weight:normal;color:#1c1c1c;letter-spacing:-0.500px;transform:scaleX(0.9979);transform-origin:0 0;">Open</span>
<span class="t" id="t9" style="left:153.54px;top:183px;font-size:16px;font-weight:normal;color:#1c1c1c;letter-spacing:-0.500px;transform:scaleX(0.9294);transform-origin:0 0;">Save</span>
<span class="t" id="t10" style="left:210.48px;top:183px;font-size:16px;font-weight:normal;color:#1c1c1c;letter-spacing:-0.431px;">Save As</span>
<span class="t" id="t11" style="left:281.92px;top:183px;font-size:16px;font-weight:normal;color:#b4b8bf;letter-spacing:-0.343px;">Save With</span>
<span class="t" id="t12" style="left:300.02px;top:202px;font-size:16px;font-weight:normal;color:#b4b8bf;letter-spacing:-0.166px;">Data</span>
<span class="t" id="t13" style="left:368.26px;top:183px;font-size:16px;font-weight:normal;color:#1c1c1c;letter-spacing:-0.355px;">Save Encrypted</span>
<span class="t" id="t14" style="left:491.64px;top:183px;font-size:16px;font-weight:normal;color:#1c1c1c;letter-spacing:-0.461px;">Recent</span>
<span class="t" id="t15" style="left:574.64px;top:183px;font-size:16px;font-weight:normal;color:#1c1c1c;letter-spacing:-0.081px;">Run View</span>
<span class="t" id="t16" style="left:676.08px;top:183px;font-size:16px;font-weight:normal;color:#1c1c1c;letter-spacing:0.211px;">Insights</span>
<span class="t" id="t17" style="left:748.36px;top:183px;font-size:16px;font-weight:normal;color:#1c1c1c;letter-spacing:-0.241px;">Finished Reports</span>
<span class="t" id="t18" style="left:775.3px;top:202px;font-size:16px;font-weight:normal;color:#1c1c1c;letter-spacing:-0.336px;">Designer</span>
<span class="t" id="t19" style="left:882.76px;top:183px;font-size:16px;font-weight:normal;color:#1c1c1c;letter-spacing:-0.336px;">Visualize</span>
<span class="t" id="t20" style="left:881.86px;top:202px;font-size:16px;font-weight:normal;color:#1c1c1c;letter-spacing:-0.233px;">Designer</span>
<span class="t" id="t21" style="left:979.42px;top:183px;font-size:16px;font-weight:normal;color:#1c1c1c;letter-spacing:-0.500px;transform:scaleX(0.9873);transform-origin:0 0;">Calendar</span>
<span class="t" id="t22" style="left:1068.32px;top:183px;font-size:16px;font-weight:normal;color:#1c1c1c;letter-spacing:-0.228px;">Job</span>
<span class="t" id="t23" style="left:1121.58px;top:183px;font-size:16px;font-weight:normal;color:#1c1c1c;letter-spacing:-0.500px;transform:scaleX(0.9925);transform-origin:0 0;">Master</span>
<span class="t" id="t24" style="left:1132.26px;top:202px;font-size:16px;font-weight:normal;color:#1c1c1c;letter-spacing:-0.500px;transform:scaleX(0.9993);transform-origin:0 0;">Job</span>
<span class="t" id="t25" style="left:1226.54px;top:183px;font-size:16px;font-weight:normal;color:#1c1c1c;letter-spacing:-0.037px;">Abort</span>
<span class="t" id="t26" style="left:1222.04px;top:202px;font-size:16px;font-weight:normal;color:#1c1c1c;letter-spacing:-0.500px;transform:scaleX(0.9626);transform-origin:0 0;">Search</span>
<span class="t" id="t27" style="left:266.14px;top:235px;font-size:16px;font-weight:normal;color:#8d929a;letter-spacing:-0.440px;">File</span>
<span class="t" id="t28" style="left:583.3px;top:235px;font-size:16px;font-weight:normal;color:#8d929a;letter-spacing:-0.500px;transform:scaleX(0.9800);transform-origin:0 0;">Search</span>
<span class="t" id="t29" style="left:776.58px;top:235px;font-size:16px;font-weight:normal;color:#8d929a;letter-spacing:-0.273px;">Graphical</span>
<span class="t" id="t30" style="left:1039.2px;top:235px;font-size:16px;font-weight:normal;color:#8d929a;letter-spacing:-0.373px;">Scheduler</span>
<span class="t" id="t31" style="left:1205.58px;top:235px;font-size:16px;font-weight:normal;color:#8d929a;letter-spacing:-0.298px;">Reset View</span>
<span class="t" id="t32" style="left:17.3px;top:308px;font-size:25px;font-weight:normal;color:#161616;letter-spacing:-0.500px;transform:scaleX(0.9871);transform-origin:0 0;">Query Builder</span>
<span class="t" id="t33" style="left:55.04px;top:361px;font-size:16px;font-weight:bold;color:#161616;letter-spacing:0.460px;">Tables and Fields</span>
<span class="t" id="t34" style="left:54.14px;top:400px;font-size:16px;font-weight:normal;color:#1c1c1c;letter-spacing:-0.500px;transform:scaleX(0.8773);transform-origin:0 0;">FSGS</span>
<span class="t" id="t35" style="left:53.58px;top:439px;font-size:16px;font-weight:normal;color:#1c1c1c;letter-spacing:0.089px;">Linking</span>
<span class="t" id="t36" style="left:54.14px;top:478px;font-size:16px;font-weight:normal;color:#1c1c1c;letter-spacing:-0.423px;">Parameters</span>
<span class="t" id="t37" style="left:55.26px;top:517px;font-size:16px;font-weight:normal;color:#1c1c1c;letter-spacing:-0.310px;">Advanced Query</span>
<span class="t" id="t38" style="left:54.14px;top:556px;font-size:16px;font-weight:normal;color:#1c1c1c;letter-spacing:-0.500px;transform:scaleX(0.9948);transform-origin:0 0;">NLQ</span>
<span class="t" id="t39" style="left:55.04px;top:595px;font-size:16px;font-weight:normal;color:#1c1c1c;letter-spacing:-0.223px;">VoV Builder</span>
<span class="t" id="t40" style="left:16.62px;top:645px;font-size:25px;font-weight:normal;color:#161616;letter-spacing:-0.500px;transform:scaleX(0.9883);transform-origin:0 0;">Data Grids</span>
<span class="t" id="t41" style="left:53.92px;top:698px;font-size:16px;font-weight:normal;color:#1c1c1c;letter-spacing:-0.251px;">Details</span>
<span class="t" id="t42" style="left:53.92px;top:737px;font-size:16px;font-weight:normal;color:#1c1c1c;letter-spacing:-0.066px;">Summary</span>
<span class="t" id="t43" style="left:53.92px;top:776px;font-size:16px;font-weight:normal;color:#1c1c1c;letter-spacing:-0.130px;">Pivot</span>
<span class="t" id="t44" style="left:319.54px;top:274px;font-size:25px;font-weight:normal;color:#161616;letter-spacing:-0.500px;transform:scaleX(0.9896);transform-origin:0 0;">Tables and Fields</span>
<span class="t" id="t45" style="left:314.26px;top:320px;font-size:16px;font-weight:normal;color:#1c1c1c;letter-spacing:-0.156px;">Tables/Fields</span>
<span class="t" id="t46" style="left:372.36px;top:388px;font-size:16px;font-weight:normal;color:#1c1c1c;letter-spacing:-0.498px;">Database Files</span>
<span class="t" id="t47" style="left:373.26px;top:420px;font-size:16px;font-weight:normal;color:#1c1c1c;letter-spacing:-0.500px;transform:scaleX(0.9575);transform-origin:0 0;">ABCLocal</span>
<span class="t" id="t48" style="left:24.3px;top:912px;font-size:24px;font-weight:normal;color:#1a6fd4;letter-spacing:-0.500px;transform:scaleX(0.9762);transform-origin:0 0;-webkit-text-stroke:0.6px #f3f3f3;">View</span>
<span class="t" id="t49" style="left:97.36px;top:912px;font-size:24px;font-weight:normal;color:#383838;letter-spacing:-0.500px;transform:scaleX(0.9460);transform-origin:0 0;-webkit-text-stroke:0.6px #f3f3f3;">Scheduler</span>
<span class="t" id="t50" style="left:218.9px;top:912px;font-size:24px;font-weight:normal;color:#383838;letter-spacing:-0.500px;transform:scaleX(0.9527);transform-origin:0 0;-webkit-text-stroke:0.6px #f3f3f3;">Finished Reports</span>
<span class="t" id="t51" style="left:409.42px;top:912px;font-size:24px;font-weight:normal;color:#383838;letter-spacing:-0.500px;transform:scaleX(0.9423);transform-origin:0 0;-webkit-text-stroke:0.6px #f3f3f3;">Visualize</span>
<span class="t" id="t52" style="left:518.9px;top:912px;font-size:24px;font-weight:normal;color:#383838;letter-spacing:-0.500px;transform:scaleX(0.9682);transform-origin:0 0;-webkit-text-stroke:0.6px #f3f3f3;">Insights</span>
<span class="t" id="t53" style="left:618.62px;top:912px;font-size:24px;font-weight:normal;color:#383838;letter-spacing:-0.500px;transform:scaleX(0.9623);transform-origin:0 0;-webkit-text-stroke:0.6px #f3f3f3;">Logs</span>
<span class="t" id="t54" style="left:692.02px;top:912px;font-size:24px;font-weight:normal;color:#383838;letter-spacing:-0.500px;transform:scaleX(0.9443);transform-origin:0 0;-webkit-text-stroke:0.6px #f3f3f3;">Settings</span>
<span class="t" id="t55" style="left:123.7px;top:974px;font-size:16px;font-weight:normal;color:#1c1c1c;letter-spacing:-0.002px;">Connection: ABCLocal (Active): (Microsoft SQL Server - 14.00.1000)</span>
<span class="t" id="t56" style="left:1668.98px;top:974px;font-size:16px;font-weight:normal;color:#1c1c1c;letter-spacing:-0.166px;">Scheduler Service is Running</span>
</body></html>
